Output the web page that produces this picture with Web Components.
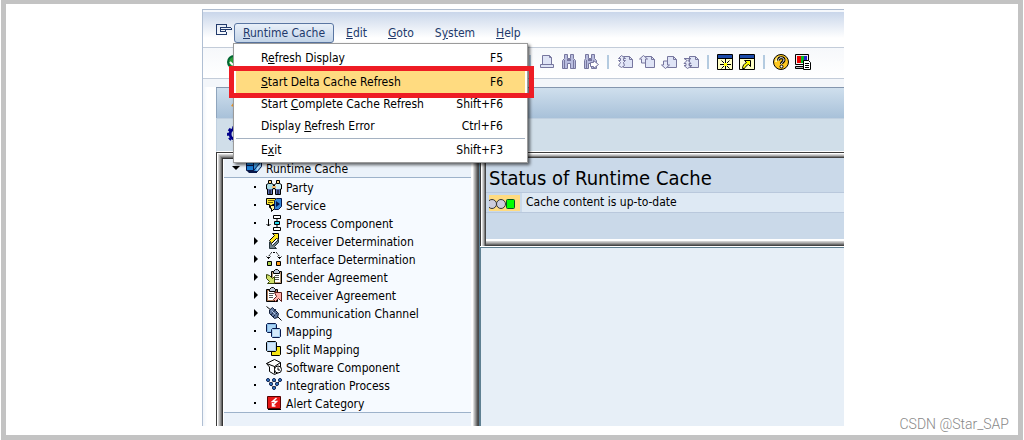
<!DOCTYPE html>
<html lang="en">
<head>
<meta charset="utf-8">
<title>Runtime Cache</title>
<style>
html, body { margin: 0; min-height: 100vh; }
body { display: flex; background: #fff; color: #000; font: 12px/18px "DejaVu Sans Condensed", "Noto Sans", sans-serif; }
</style>
</head>
<body>
<page-frame>
  <sap-window>
    <menu-bar slot="menu">
      <menu-title active><u>R</u>untime Cache
        <menu-popup slot="popup">
          <menu-entry key="F5">R<u>e</u>fresh Display</menu-entry>
          <menu-entry key="F6" marked><u>S</u>tart Delta Cache Refresh</menu-entry>
          <menu-entry key="Shift+F6">Start <u>C</u>omplete Cache Refresh</menu-entry>
          <menu-entry key="Ctrl+F6">Display <u>R</u>efresh Error</menu-entry>
          <menu-rule></menu-rule>
          <menu-entry key="Shift+F3">E<u>x</u>it</menu-entry>
        </menu-popup>
      </menu-title>
      <menu-title><u>E</u>dit</menu-title>
      <menu-title><u>G</u>oto</menu-title>
      <menu-title>S<u>y</u>stem</menu-title>
      <menu-title><u>H</u>elp</menu-title>
    </menu-bar>
    <tool-bar slot="tools"></tool-bar>
    <cache-tree slot="tree">
      <tree-row icon="party">Party</tree-row>
      <tree-row icon="service">Service</tree-row>
      <tree-row icon="process">Process Component</tree-row>
      <tree-row icon="receiver" closed>Receiver Determination</tree-row>
      <tree-row icon="interface" closed>Interface Determination</tree-row>
      <tree-row icon="senderagr" closed>Sender Agreement</tree-row>
      <tree-row icon="receiveragr" closed>Receiver Agreement</tree-row>
      <tree-row icon="channel" closed>Communication Channel</tree-row>
      <tree-row icon="mapping">Mapping</tree-row>
      <tree-row icon="split">Split Mapping</tree-row>
      <tree-row icon="software">Software Component</tree-row>
      <tree-row icon="integration">Integration Process</tree-row>
      <tree-row icon="alert">Alert Category</tree-row>
    </cache-tree>
    <status-pane slot="status"><span slot="title">Status of Runtime Cache</span>Cache content is up-to-date</status-pane>
  </sap-window>
  <span slot="mark">CSDN @Star_SAP</span>
</page-frame>

<script>
const G = 'fill="#dfe4f6" stroke="#77779f"';
const page = `<path d="M6.5 2.5h6l3 3v8h-9z" ${G}/><path d="M12.5 2.5v3h3" fill="none" stroke="#77779f"/>`;
const ICONS = {
  enter: '<circle cx="7" cy="8" r="7" fill="#063"/><circle cx="7" cy="8" r="5" fill="#2ca03c"/><path d="M3 8l3 3" stroke="#fff" stroke-width="2" fill="none"/>',
  wand: '<path d="M4 10l3-4v5z" fill="#e8952a"/>',
  gear: '<circle cx="8" cy="8" r="5" fill="none" stroke="#00008b" stroke-width="3"/><circle cx="8" cy="8" r="7" fill="none" stroke="#00008b" stroke-width="2" stroke-dasharray="3 2"/>',
  exit: '<path d="M10.5 4V1.500H.5v10h10V9M4 4.500h11M15 4.500v2H10M4.500 5v4M5 8.500h4M9.500 7v2M4.500 6.500h5" fill="none" stroke="#223a6b" shape-rendering="crispEdges"/>',
  print: `<path d="M3.5 1.5h7l2 2v7h-9z" ${G}/><path d="M10.5 1.5v2h2" fill="none" stroke="#77779f"/><path d="M1.5 10.5h13v3h-13z" ${G}/>`,
  find: '<path d="M3.5.5h3v4h3v-4h3v4l2 2v8h-5v-5h-3v5h-5v-8l2-2z" fill="#b9bddf" stroke="#77779f"/><path d="M3 6h1v8H3zM12 6h1v8h-1zM6 5h4v2H6z" fill="#77779f"/>',
  findnext: '<path d="M2.5.5h3v4h3v-4h3v4l2 2v8h-5v-5h-3v5h-4v-8l1-2z" fill="#b9bddf" stroke="#77779f"/><path d="M3 6h1v8H3zM5 5h4v2H5z" fill="#77779f"/><path d="M7.5 8.500h3v-2l5 4-5 4v-2h-3z" fill="#fff" stroke="#77779f"/>',
  first: page + '<path d="M4.500 1.500l-3 3h2v2h-2l2 2-2 3 3 2 3-2-1-3 2-2h-2v-2h2z" fill="#e6e9f8" stroke="#77779f"/>',
  prev: page + '<path d="M4.500 1.500l-4 3.500h2v4h4v-4h2z" fill="#e6e9f8" stroke="#77779f"/>',
  next: page + '<path d="M4.500 14.500l-4-3.500h2v-4h4v4h2z" fill="#e6e9f8" stroke="#77779f"/>',
  last: page + '<path d="M4.500 14.500l-3.500-3h2v-2h-2l3-3-3-2h7l-3 2 3 3h-2v2h3z" fill="#e6e9f8" stroke="#77779f"/>',
  session: '<path d="M.5.5h15v15H.5z" fill="#ffffc6" stroke="#000"/><path d="M1 1h14v3H1z" fill="#1c4aa8"/><path d="M1 4h14v1H1z" fill="#000"/><path d="M8.500 5v10M3 10.500h11M4.500 6.500l8 8M12.500 6.500l-8 8" stroke="#000"/><path d="M7 9h3v3H7z" fill="#ff0"/>',
  shortcut: '<path d="M.5.5h15v15H.5z" fill="#ffffc6" stroke="#000"/><path d="M1 1h14v3H1z" fill="#1c4aa8"/><path d="M1 4h14v1H1z" fill="#000"/><path d="M5.500 6.500h6v6l-2-2c-2 1-3 2-4 4h-2c0-3 2-5 4-6z" fill="#ff0" stroke="#000"/>',
  help: '<circle cx="8" cy="8" r="7.500" fill="#ffc820" stroke="#000"/><path d="M3 8a5 5 0 0 1 5-5" fill="none" stroke="#fff3a0" stroke-width="2"/><path d="M5.500 6.500c0-4 5.500-3.500 5.500-.5 0 2-2.500 2-2.500 4" fill="none" stroke="#000" stroke-width="3"/><path d="M5.500 6.500c0-4 5.500-3.500 5.500-.5 0 2-2.500 2-2.500 4" fill="none" stroke="#fff"/><circle cx="8.500" cy="12.500" r="1.500" fill="#fff" stroke="#000"/>',
  layout: '<path d="M.5.5h13v10H.5z" fill="#eee" stroke="#000"/><path d="M2 2h4v7H2z" fill="#e00"/><path d="M6 2h3v7H6z" fill="#0b2"/><path d="M9 2h3v7H9z" fill="#22c"/><path d="M.5 12.500h12v2H.5z" fill="#bbb" stroke="#000"/><path d="M8.500 6.500h5l2 2v7h-7z" fill="#fff" stroke="#000"/><path d="M10 9.500h4M10 11.500h4M10 13.500h4" stroke="#000"/>',
  cube: '<path d="M.5 2.500h7v8h-7z" fill="#1b7fd6" stroke="#07174a"/><path d="M7.500 2.500h8v4l-5 6-3-2z" fill="#3d9be0" stroke="#07174a"/><path d="M15 3v3l-4.500 5.500V7z" fill="#a6d6f8"/><path d="M1 5.500h6M7.500 10.500l7-8" stroke="#07174a" fill="none"/><path d="M1 11h10v2H3z" fill="#07174a"/>',
  party: '<path d="M2.500 4.500v-3h3v3M10.500 4.500v-3h3v3" fill="#ffd68a" stroke="#000"/><path d="M.5 10V5.500l2-1h3l2 1V10h-1v5.500h-5V10z" fill="#a9dbe4" stroke="#000"/><path d="M8.500 10V5.500l2-1h3l2 1V10h-1v5.500h-5V10z" fill="#d3f0f4" stroke="#000"/><path d="M2 10h4v5H2zM10 10h4v5h-4z" fill="#5a6db0"/><path d="M4 11v5M12 11v5" stroke="#000"/><path d="M6 7h4v2H6z" fill="#f2b970"/>',
  service: '<path d="M.5 1.500h9v6h-3l-3 3v-3h-3z" fill="#ffe93b" stroke="#000"/><path d="M2 3.500h6M2 5.500h5" stroke="#6a5a00"/><path d="M4.500 8.500h6v3h-2l-3 3v-3h-1z" fill="#fff9a0" stroke="#000"/><path d="M8.500 3.500l2-2h5v8l-3 3h-4z" fill="#3287d8" stroke="#07174a"/><path d="M10 4l4 3-4 3z" fill="#07174a"/>',
  process: '<path d="M2.500 4v7M.5 9l2 2 2-2" stroke="#000" fill="none"/><path d="M7.500.5h7v3h-7zM7.500 12.500h7v3h-7z" fill="#fff" stroke="#000"/><path d="M8.500 6.500h5v3h-5z" fill="#25d8ee" stroke="#000"/><path d="M11 3.500v3M11 9.500v3" stroke="#000"/>',
  receiver: '<path d="M6.500.5h6v6l-2-1-5 5-2-3 5-5z" fill="#ffe81f" stroke="#000"/><path d="M3.500 9v6.500h7l-2-2 4-4v-3l-6 6z" fill="#71828b" stroke="#26343c"/>',
  interface: '<path d="M2.500 8V5.500l3-4h5l3 4V8" fill="none" stroke="#000" stroke-dasharray="2 1"/><path d="M.5 5.500l2 2 2-2M11.500 5.500l2 2 2-2" fill="none" stroke="#000"/><path d="M1.500 10.500h4v4h-4z" fill="#a8d04c" stroke="#000"/><path d="M10.500 10.500h4v4h-4z" fill="#ff9d16" stroke="#000"/>',
  senderagr: '<path d="M5.500 2.500h10v12h-10z" fill="#b99774" stroke="#000"/><path d="M7 4h7v9H7z" fill="#fff"/><path d="M7.500 2.500l2-2h2l2 2v2h-6z" fill="#bcc6d8" stroke="#000"/><path d="M9 6.500h4M9 8.500h4M9 10.500h4" stroke="#555"/><path d="M.5 5.500l3 1 3 3 2-2v7h-7l2-2-3-3z" fill="#cfdf69" stroke="#34420b"/>',
  receiveragr: '<path d="M.5 2.500h11v12H.5z" fill="#a97958" stroke="#000"/><path d="M2 4h8v9H2z" fill="#fff"/><path d="M3.500 2.500l2-2h2l2 2v2h-6z" fill="#bcc6d8" stroke="#000"/><path d="M3 6.500h5M3 8.500h4M3 10.500h4" stroke="#555"/><path d="M8.500 5.500h7v9l-3-3-3 3-2-2 3-3z" fill="#ffb3ad" stroke="#5d1b18"/>',
  channel: '<path d="M.5 1.500l5 4M10.500 10.500l5 5" stroke="#000"/><path d="M3.500 5l3-2.500 6 6-1 4-3 1-5-5z" fill="#60789f" stroke="#14213d"/><path d="M5 10l5-6M7 12l5-5" stroke="#14213d"/><path d="M5.500 5.500l4 4" stroke="#b8c9e6"/>',
  mapping: '<path d="M.5 1.500l1-1h8l1 1v7l-1 1h-8l-1-1z" fill="#86bbe8" stroke="#07174a"/><path d="M2 2h7v6H2z" fill="#a9d4f5"/><path d="M5.500 6.500l1-1h7l1 1v7l-1 1h-7l-1-1z" fill="#a9d0f2" stroke="#07174a"/><path d="M7 7h6v6H7z" fill="#d3e9fb"/>',
  split: '<path d="M5.500 5.500h9v8l-1 1h-8z" fill="#f5e413" stroke="#000"/><path d="M.5 1.500l1-1h8l1 1v8l-1 1h-8l-1-1z" fill="#a9cbea" stroke="#000"/><path d="M2 2h7v7H2z" fill="#cfe5fa"/>',
  software: '<path d="M.5 4.500l8-4 6 3v9l-6 3-5-3V8z" fill="#fff" stroke="#000"/><path d="M.5 4.500l8 3 6-4M8.500 7.500v7" fill="none" stroke="#000"/><circle cx="12" cy="10.500" r="3.500" fill="#fff" stroke="#000"/><path d="M12 8.500v2.500h2" fill="none" stroke="#000"/>',
  integration: '<path d="M2 3l6 9 6-9M5 7l3-4 3 4" fill="none" stroke="#000" stroke-dasharray="2 1"/><g fill="#3c8fe0" stroke="#07174a"><circle cx="2" cy="3" r="1.500"/><circle cx="8" cy="3" r="1.500"/><circle cx="14" cy="3" r="1.500"/><circle cx="5" cy="7" r="1.500"/><circle cx="11" cy="7" r="1.500"/><circle cx="8" cy="11" r="1.500"/></g>',
  alert: '<path d="M1.500 1.500h13v12h-13z" fill="#e51616" stroke="#500"/><path d="M2 14.500h13" stroke="#000"/><path d="M10.500 3L6.500 6.500h4l-4 4M6.500 8v3h3" fill="none" stroke="#fff" stroke-width="1.500"/>'
};

const define = (name, html, setup) => customElements.define(name, class extends HTMLElement {
  constructor() {
    super();
    const t = document.createElement('template');
    t.innerHTML = html;
    this.attachShadow({ mode: 'open' }).append(t.content.cloneNode(true));
  }
  connectedCallback() { if (setup) setup(this, this.shadowRoot); }
});

define('px-icon', `<style>:host{display:block;flex:none;width:16px;height:16px}svg{display:block}</style><div></div>`,
  (el, root) => {
    root.querySelector('div').innerHTML = `<svg width="16" height="16" viewBox="0 0 16 16" aria-hidden="true">${ICONS[el.getAttribute('name')] || ''}</svg>`;
  });

define('page-frame', `<style>
  :host{display:grid;grid-template-columns:196px 1fr 174px;flex:1;box-sizing:border-box;margin:0 1px;
    border:5px solid #c3c3c3;border-top-width:4px;padding:5px 0 9px}
  .app{grid-column:2;display:flex;min-width:0}
  .mark{align-self:end;justify-self:end;margin:0 9px -7px 0;font:300 14px/18px Roboto,sans-serif;color:#888;white-space:nowrap}
  </style><div class="app"><slot></slot></div><div class="mark"><slot name="mark"></slot></div>`);

define('sap-window', `<style>
  :host{display:flex;flex-direction:column;flex:1;min-width:0;box-sizing:border-box;border-left:1px solid #b0bfd3;
    border-top:1px solid #aebccf;background:linear-gradient(90deg,#f1f5fa,#fff 4px)}
  .body{flex:1;display:flex;flex-direction:column;margin-left:13px;border-top:1px solid #8496ae}
  .title{height:30px;box-sizing:border-box;border-left:1px solid #8fa5bd;padding:8px 10px;background:linear-gradient(#cfdfed,#a8c1d9)}
  .bar{height:34px;box-sizing:border-box;border:1px solid #c0d0e0;border-width:1px 0 1px 1px;padding:7px 10px;background:#d0dee9;border-bottom-color:#fff}
  .panes{flex:1;display:grid;grid-template-columns:264px 1fr}
  ::slotted(*){min-width:0}
  </style><slot name="menu"></slot><slot name="tools"></slot>
  <div class="body"><div class="title"><px-icon name="wand"></px-icon></div><div class="bar"><px-icon name="gear"></px-icon></div>
  <div class="panes"><slot name="tree"></slot><slot name="status"></slot></div></div>`);

define('menu-bar', `<style>
  :host{display:flex;align-items:flex-start;gap:3px;height:37px;box-sizing:border-box;padding:11px 0 0 13px;
    border-top:2px solid #f5f8fc;background:linear-gradient(#c9d6ea,#fff 26px);color:#223a6b}
  </style><px-icon name="exit"></px-icon><slot></slot>`);

define('menu-title', `<style>
  :host{display:block;position:relative}
  button{display:block;height:20px;box-sizing:border-box;padding:0 8px;border:1px solid transparent;border-radius:3px;background:none;
    font:inherit;line-height:18px;color:inherit;white-space:nowrap}
  :host([active]) button{border-color:#5a76a2;background:linear-gradient(#e9f0f9,#c3d4e8)}
  :host([active]){margin-left:-1px;z-index:2}
  ::slotted(menu-popup){position:absolute;top:20px;left:-1px}
  </style><button type="button"><slot></slot></button><slot name="popup"></slot>`);

define('menu-popup', `<style>
  :host{display:block;width:295px;box-sizing:border-box;padding:3px 2px 1px;border:1px solid #9b9b9b;background:#fff;color:#000;
    box-shadow:2px 2px 3px rgba(0,0,0,.6)}
  </style><slot></slot>`);

define('menu-rule', `<style>:host{display:block;height:1px;margin-top:1px;background:#a5b2c2}</style>`);

define('menu-entry', `<style>
  :host{display:block;position:relative}
  button{display:flex;justify-content:space-between;width:100%;height:22px;padding:0 22px 0 25px;border:0;background:none;
    font:inherit;line-height:22px;color:#000;white-space:nowrap;text-align:left}
  :host([marked]){margin-top:2px;z-index:1}
  :host([marked]) button{background:#ffdb80}
  :host([marked])::after{content:"";position:absolute;inset:-5px -9px -5px -7px;border:5px solid #ee1c24;pointer-events:none}
  </style><button type="button"><span><slot></slot></span><span class="key"></span></button>`,
  (el, root) => { root.querySelector('.key').textContent = el.getAttribute('key'); });

define('tool-bar', `<style>
  :host{display:flex;align-items:center;gap:6px;height:40px;box-sizing:border-box;padding:0 24px 11px;border-top:1px solid #c3ccd9;
    background:linear-gradient(#f6f8fb,#fff 30px,#c3ccd9 30px,#c3ccd9 31px,#f3f6fa 31px)}
  button{flex:none;width:16px;height:16px;padding:0;border:0;background:none}
  i{flex:none;width:2px;height:14px;margin:0 2px;background:#b4cbe0}
  i.wide{margin-left:280px}
  </style>`,
  (el, root) => {
    const list = ['enter:Enter', 'wide', 'print:Print', 'find:Find', 'findnext:Find next', '|', 'first:First page', 'prev:Previous page',
      'next:Next page', 'last:Last page', '|', 'session:New session', 'shortcut:Create shortcut', '|', 'help:Help', 'layout:Customize layout'];
    root.append(...list.map(item => {
      const [icon, label] = item.split(':');
      const node = document.createElement(label ? 'button' : 'i');
      if (!label) { if (icon === 'wide') node.className = 'wide'; return node; }
      node.type = 'button';
      node.setAttribute('aria-label', label);
      node.innerHTML = `<px-icon name="${icon}"></px-icon>`;
      return node;
    }));
  });

define('cache-tree', `<style>
  :host{display:block;box-sizing:border-box;padding:7px 9px 0 8px;background:#fff;
    box-shadow:inset 1px 1px #3a3a3a,inset 2px 2px #fff,inset 3px 3px #d6d6d6,inset 4px 4px #b4b4b4,inset 5px 5px #949494,inset 6px 6px #6a6a6a,inset 7px 7px #333,
      inset -1px 0 #5a7f94,inset -2px 0 #4a4a4a,inset -3px 0 #555,inset -4px 0 #777,inset -5px 0 #999,inset -6px 0 #b8b8b8,inset -7px 0 #ddd}
  .in{background:#ebf2fa;height:100%}
  .head{display:flex;align-items:center;height:18px;border-bottom:1px solid #9db2ca;padding-left:8px}
  .arrow{width:0;border:4px solid transparent;border-top-color:#000;border-bottom:0;margin-right:6px}
  .head span{margin-left:4px;padding-top:2px}
  .rows{background:#f6faff;border-bottom:1px solid #9db2ca}
  </style><div class="in"><div class="head"><div class="arrow"></div><px-icon name="cube"></px-icon><span>Runtime Cache</span></div>
  <div class="rows" role="tree"><slot></slot></div></div>`);

define('tree-row', `<style>
  :host{display:flex;align-items:center;height:18px;padding-left:30px;white-space:nowrap}
  .mark{width:2px;height:2px;background:#000;margin:0 10px 0 0}
  :host([closed]) .mark{width:0;height:0;background:none;border:4px solid transparent;border-left-color:#000;border-right:0;margin-right:8px}
  span{margin-left:4px;padding-top:2px}
  </style><div class="mark"></div><span><slot></slot></span>`,
  (el, root) => {
    const icon = document.createElement('px-icon');
    icon.setAttribute('name', el.getAttribute('icon'));
    root.querySelector('.mark').after(icon);
  });

define('status-pane', `<style>
  :host{display:flex;flex-direction:column}
  .top{box-sizing:border-box;height:94px;padding:7px 0 0 6px;background:#cad9e9;
    box-shadow:inset 1px 1px #3a3a3a,inset 2px 2px #fff,inset 3px 3px #d6d6d6,inset 4px 4px #b4b4b4,inset 5px 5px #7d7d7d,inset 6px 6px #444,
      inset 0 -1px #444,inset 0 -2px #6a6a6a,inset 0 -3px #949494,inset 0 -4px #b4b4b4,inset 0 -5px #d0d0d0,inset 0 -7px #fff}
  h1{margin:0;padding:6px 0 0 3px;font-size:20px;line-height:27px;font-weight:400;border-bottom:1px solid #b9c8dc;white-space:nowrap}
  .row{display:flex;height:19px;border-bottom:1px solid #b9c8dc}
  .light{width:31px;margin:2px 2px 1px 3px;background:#ffdb80}
  .light svg{display:block}
  .msg{flex:1;background:#dee9f4;padding-left:4px;white-space:nowrap}
  .low{flex:1;border:1px solid #5f8092;border-width:1px 0 0 1px;margin-top:1px;background:#e7eff7}
  </style><div class="top"><h1><slot name="title"></slot></h1><div class="row"><div class="light">
  <svg width="31" height="16" viewBox="0 0 31 16"><g fill="#ccd" stroke="#333"><circle cx="3" cy="9" r="4.500"/><circle cx="12" cy="9" r="4.500"/></g>
  <rect x="17.500" y="4.500" width="8" height="9" rx="1" fill="#0f0" stroke="#052"/></svg></div><div class="msg"><slot></slot></div></div></div><div class="low"></div>`);
</script>
</body>
</html>
